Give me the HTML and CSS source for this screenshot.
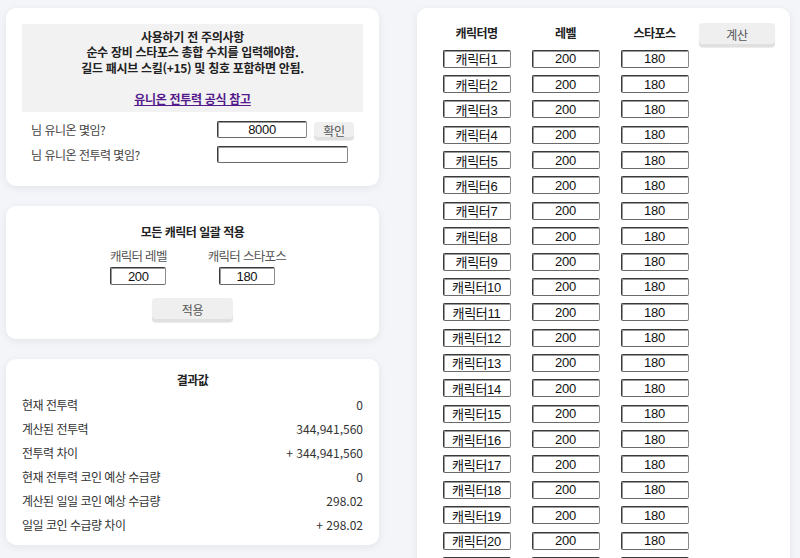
FILE: index.html
```html
<!DOCTYPE html>
<html lang="ko">
<head>
<meta charset="utf-8">
<title>유니온 전투력 계산기</title>
<link rel="stylesheet" href="styles.css">
</head>
<body>
<div class="page">
  <div class="left">
    <section class="card card-info">
      <div class="notice">
        <p>사용하기 전 주의사항</p>
        <p>순수 장비 스타포스 총합 수치를 입력해야함.</p>
        <p>길드 패시브 스킬(+15) 및 칭호 포함하면 안됨.</p>
        <p>&nbsp;</p>
        <p><a class="notice-link" href="#">유니온 전투력 공식 참고</a></p>
      </div>
      <div class="form-row">
        <span class="form-label">님 유니온 몇임?</span>
        <input class="field field-union" type="text" value="8000">
        <button class="btn btn-confirm">확인</button>
      </div>
      <div class="form-row">
        <span class="form-label">님 유니온 전투력 몇임?</span>
        <input class="field field-power" type="text" value="">
      </div>
    </section>

    <section class="card card-bulk">
      <h2 class="card-title">모든 캐릭터 일괄 적용</h2>
      <div class="bulk-groups">
        <div class="bulk-group">
          <span class="bulk-label">캐릭터 레벨</span>
          <input class="field field-bulk" type="text" value="200">
        </div>
        <div class="bulk-group">
          <span class="bulk-label">캐릭터 스타포스</span>
          <input class="field field-bulk" type="text" value="180">
        </div>
      </div>
      <button class="btn btn-apply">적용</button>
    </section>

    <section class="card card-result">
      <h2 class="card-title">결과값</h2>
      <div class="result-row"><span class="result-label">현재 전투력</span><span class="result-value">0</span></div>
      <div class="result-row"><span class="result-label">계산된 전투력</span><span class="result-value">344,941,560</span></div>
      <div class="result-row"><span class="result-label">전투력 차이</span><span class="result-value">+ 344,941,560</span></div>
      <div class="result-row"><span class="result-label">현재 전투력 코인 예상 수급량</span><span class="result-value">0</span></div>
      <div class="result-row"><span class="result-label">계산된 일일 코인 예상 수급량</span><span class="result-value">298.02</span></div>
      <div class="result-row"><span class="result-label">일일 코인 수급량 차이</span><span class="result-value">+ 298.02</span></div>
    </section>
  </div>

  <section class="card card-chars">
    <div class="chars-head">
      <span class="chars-th">캐릭터명</span>
      <span class="chars-th">레벨</span>
      <span class="chars-th">스타포스</span>
      <button class="btn btn-calc">계산</button>
    </div>
    <div class="chars-row"><input class="field field-char" value="캐릭터1"><input class="field field-char" value="200"><input class="field field-char" value="180"></div>
    <div class="chars-row"><input class="field field-char" value="캐릭터2"><input class="field field-char" value="200"><input class="field field-char" value="180"></div>
    <div class="chars-row"><input class="field field-char" value="캐릭터3"><input class="field field-char" value="200"><input class="field field-char" value="180"></div>
    <div class="chars-row"><input class="field field-char" value="캐릭터4"><input class="field field-char" value="200"><input class="field field-char" value="180"></div>
    <div class="chars-row"><input class="field field-char" value="캐릭터5"><input class="field field-char" value="200"><input class="field field-char" value="180"></div>
    <div class="chars-row"><input class="field field-char" value="캐릭터6"><input class="field field-char" value="200"><input class="field field-char" value="180"></div>
    <div class="chars-row"><input class="field field-char" value="캐릭터7"><input class="field field-char" value="200"><input class="field field-char" value="180"></div>
    <div class="chars-row"><input class="field field-char" value="캐릭터8"><input class="field field-char" value="200"><input class="field field-char" value="180"></div>
    <div class="chars-row"><input class="field field-char" value="캐릭터9"><input class="field field-char" value="200"><input class="field field-char" value="180"></div>
    <div class="chars-row"><input class="field field-char" value="캐릭터10"><input class="field field-char" value="200"><input class="field field-char" value="180"></div>
    <div class="chars-row"><input class="field field-char" value="캐릭터11"><input class="field field-char" value="200"><input class="field field-char" value="180"></div>
    <div class="chars-row"><input class="field field-char" value="캐릭터12"><input class="field field-char" value="200"><input class="field field-char" value="180"></div>
    <div class="chars-row"><input class="field field-char" value="캐릭터13"><input class="field field-char" value="200"><input class="field field-char" value="180"></div>
    <div class="chars-row"><input class="field field-char" value="캐릭터14"><input class="field field-char" value="200"><input class="field field-char" value="180"></div>
    <div class="chars-row"><input class="field field-char" value="캐릭터15"><input class="field field-char" value="200"><input class="field field-char" value="180"></div>
    <div class="chars-row"><input class="field field-char" value="캐릭터16"><input class="field field-char" value="200"><input class="field field-char" value="180"></div>
    <div class="chars-row"><input class="field field-char" value="캐릭터17"><input class="field field-char" value="200"><input class="field field-char" value="180"></div>
    <div class="chars-row"><input class="field field-char" value="캐릭터18"><input class="field field-char" value="200"><input class="field field-char" value="180"></div>
    <div class="chars-row"><input class="field field-char" value="캐릭터19"><input class="field field-char" value="200"><input class="field field-char" value="180"></div>
    <div class="chars-row"><input class="field field-char" value="캐릭터20"><input class="field field-char" value="200"><input class="field field-char" value="180"></div>
    <div class="chars-row"><input class="field field-char" value="캐릭터21"><input class="field field-char" value="200"><input class="field field-char" value="180"></div>
    <div class="chars-row"><input class="field field-char" value="캐릭터22"><input class="field field-char" value="200"><input class="field field-char" value="180"></div>
  </section>
</div>
</body>
</html>
```

FILE: styles.css
```css
html, body {
  margin: 0;
  height: 558px;
  overflow: hidden;
}

body {
  background: #f4f5f9;
  font-family: "Noto Sans CJK KR", "Noto Sans", sans-serif;
  font-size: 12px;
  letter-spacing: -0.5px;
  color: #333;
}

.page {
  display: grid;
  grid-template-columns: 373px 373px;
  column-gap: 38px;
  align-items: start;
  padding: 8px 0 0 6px;
}

.left {
  display: flex;
  flex-direction: column;
  gap: 20px;
}

.card {
  background: #fff;
  border-radius: 10px;
  box-shadow: 0 2px 8px rgba(0, 0, 0, 0.07);
}

/* ---------- info card ---------- */
.card-info {
  padding: 16px 16px 19px;
}

.notice {
  background: #f2f2f2;
  padding: 5px 0 6px;
  text-align: center;
  font-weight: bold;
  color: #222;
  line-height: 15.4px;
  letter-spacing: -0.3px;
}

.notice p {
  margin: 0;
}

.notice-link {
  color: #551a8b;
  text-decoration: underline;
}

.form-row {
  display: flex;
  align-items: center;
  height: 25px;
}

.notice + .form-row {
  margin-top: 5px;
}

.form-label {
  width: 186px;
  padding-left: 9px;
  color: #444;
}

.field {
  box-sizing: border-box;
  border: 1px solid #3a3a3a;
  border-right-color: #8a8a8a;
  border-bottom-color: #6a6a6a;
  box-shadow: inset 1px 1px 0 #9a9a9a;
  border-radius: 2px;
  background: #fff;
  font-family: "Liberation Sans", "Noto Sans CJK KR", sans-serif;
  font-size: 13px;
  letter-spacing: -0.3px;
  color: #111;
  text-align: center;
  padding: 0 2px;
  margin: 0;
  outline: none;
}

.field-union {
  width: 90px;
  height: 17px;
}

.field-power {
  width: 131px;
  height: 17px;
}

.btn {
  box-sizing: border-box;
  border: none;
  border-radius: 4px;
  background: #efefef;
  box-shadow: inset 0 -3px 0 #e0e0e0, 0 1px 1px rgba(0, 0, 0, 0.08);
  font-family: "Noto Sans CJK KR", sans-serif;
  font-size: 12px;
  letter-spacing: -0.3px;
  color: #555;
  padding: 0 0 2px;
  margin: 0;
  cursor: pointer;
}

.btn-confirm {
  width: 40px;
  height: 18px;
  margin-left: 7px;
  margin-top: 2px;
}

/* ---------- bulk card ---------- */
.card-bulk {
  padding: 17px 16px 17px;
  display: flex;
  flex-direction: column;
  align-items: center;
}

.card-title {
  margin: 0;
  font-size: 12px;
  font-weight: bold;
  line-height: 17px;
  color: #222;
  text-align: center;
}

.bulk-groups {
  display: flex;
  gap: 41px;
  margin-top: 7px;
  padding-left: 11px;
}

.bulk-group {
  display: flex;
  flex-direction: column;
  align-items: center;
}

.bulk-label {
  line-height: 17px;
  color: #555;
  font-size: 12.5px;
  letter-spacing: -0.7px;
}

.field-bulk {
  width: 56px;
  height: 18px;
  margin-top: 3px;
}

.btn-apply {
  width: 81px;
  height: 24px;
  margin-top: 13px;
}

/* ---------- result card ---------- */
.card-result {
  padding: 12px 16px 9px;
}

.card-result .card-title {
  margin-bottom: 4px;
}

.result-row {
  display: flex;
  justify-content: space-between;
  align-items: center;
  height: 24px;
  color: #333;
}

.result-value {
  letter-spacing: 0;
}

/* ---------- character card ---------- */
.card-chars {
  padding: 15px 0 0 15px;
  height: 700px;
}

.chars-head {
  display: grid;
  grid-template-columns: 89px 89px 89px 76px;
  height: 23px;
}

.chars-th {
  text-align: center;
  font-weight: bold;
  color: #222;
  line-height: 17px;
  padding-top: 1px;
}

.btn-calc {
  width: 76px;
  height: 24px;
}

.chars-row {
  display: grid;
  grid-template-columns: 89px 89px 89px;
  justify-items: center;
  align-items: center;
  height: 25.37px;
}

.field-char {
  width: 68px;
  height: 18px;
}
```
